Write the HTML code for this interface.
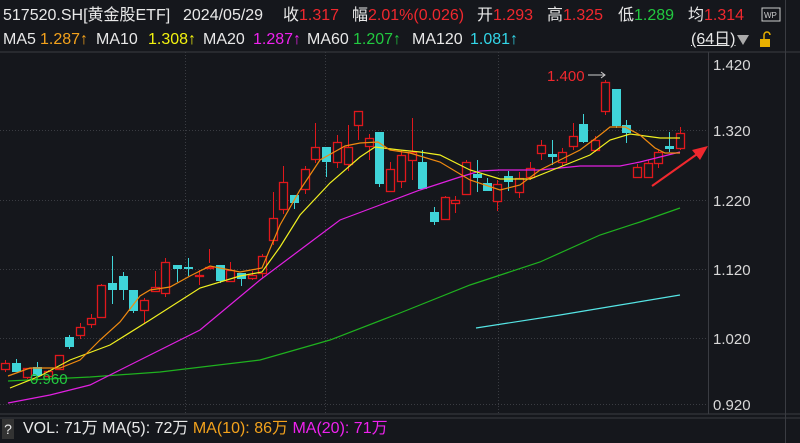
<!DOCTYPE html>
<html><head><meta charset="utf-8"><style>
body{margin:0;background:#15171c;width:800px;height:443px;overflow:hidden;font-family:"Liberation Sans","Noto Sans CJK SC",sans-serif;}
.t{position:absolute;white-space:nowrap;font-size:16px;line-height:20px;height:20px;color:#e8e8e8;}
.r{color:#f0282e}.g{color:#22c940}.o{color:#f3a21c}.y{color:#f2f20f}.m{color:#ee22ee}.c{color:#33d6e8}
</style></head><body>
<div class="t" style="left:3px;top:6px">517520.SH[黄金股ETF]</div>
<div class="t" style="left:183px;top:6px">2024/05/29</div>
<div class="t" style="left:283px;top:6px">收<span class="r">1.317</span></div>
<div class="t" style="left:352px;top:6px">幅<span class="r">2.01%(0.026)</span></div>
<div class="t" style="left:477px;top:6px">开<span class="r">1.293</span></div>
<div class="t" style="left:547px;top:6px">高<span class="r">1.325</span></div>
<div class="t" style="left:618px;top:6px">低<span class="g">1.289</span></div>
<div class="t" style="left:688px;top:6px">均<span class="r">1.314</span></div>
<div class="t" style="left:3px;top:30px">MA5</div><div class="t o" style="left:40px;top:30px">1.287↑</div>
<div class="t" style="left:96px;top:30px">MA10</div><div class="t y" style="left:148px;top:30px">1.308↑</div>
<div class="t" style="left:203px;top:30px">MA20</div><div class="t m" style="left:253px;top:30px">1.287↑</div>
<div class="t" style="left:307px;top:30px">MA60</div><div class="t g" style="left:353px;top:30px">1.207↑</div>
<div class="t" style="left:412px;top:30px">MA120</div><div class="t c" style="left:470px;top:30px">1.081↑</div>
<div class="t" style="left:691px;top:30px;text-decoration:underline">(64日)</div>
<div class="t" style="left:23px;top:419px">VOL: 71万 MA(5): 72万 <span class="o">MA(10): 86万</span> <span class="m">MA(20): 71万</span></div>
<div class="t" style="left:2px;top:419px;background:#333;width:12px;text-align:center;font-size:14px">?</div>
<svg width="800" height="443" style="position:absolute;left:0;top:0" id="s">
<line x1="0" y1="52" x2="800" y2="52" stroke="#3a3c42"/>
<line x1="0" y1="414" x2="800" y2="414" stroke="#3a3c42"/>
<line x1="0" y1="418" x2="800" y2="418" stroke="#3a3c42"/>
<line x1="708.5" y1="52" x2="708.5" y2="414" stroke="#3a3c42"/>
<line x1="785.5" y1="0" x2="785.5" y2="443" stroke="#3a3c42"/>
<g stroke="#3a3c42" stroke-dasharray="1,2">
<line x1="0" y1="130.5" x2="708" y2="130.5"/><line x1="0" y1="200.5" x2="708" y2="200.5"/><line x1="0" y1="269.5" x2="708" y2="269.5"/><line x1="0" y1="338.5" x2="708" y2="338.5"/><line x1="0" y1="404.5" x2="708" y2="404.5"/>
<line x1="185.5" y1="52" x2="185.5" y2="414"/><line x1="325.5" y1="52" x2="325.5" y2="414"/><line x1="498.5" y1="52" x2="498.5" y2="414"/>
</g>
<g font-size="15" fill="#d8d8d8" font-family="Liberation Sans">
<text x="713" y="70">1.420</text><text x="713" y="136">1.320</text><text x="713" y="206">1.220</text><text x="713" y="275">1.120</text><text x="713" y="344">1.020</text><text x="713" y="410">0.920</text>
</g>
<rect x="762" y="8" width="18" height="13" fill="none" stroke="#ccc"/><text x="764" y="18" font-size="8" fill="#ccc" font-family="Liberation Sans">WP</text>
<path d="M737 35 L749 35 L743 45Z" fill="#aaa"/>
<rect x="760" y="39" width="10" height="8" fill="#e8b000"/><path d="M764 39 v-4 a3 3 0 0 1 6 0" fill="none" stroke="#e8b000" stroke-width="1.5"/>
<g id="c"></g>
<g fill="none" stroke-width="1.2">
<polyline stroke="#1fb21f" points="8,381 90,377 160,372 260,360 330,340 400,313 470,285 540,262 600,235 640,222 680,208"/>
<polyline stroke="#55e5e5" points="476,328 560,315 620,305 680,295"/>
<polyline stroke="#e020e0" points="8,403 50,395 90,385 150,355 200,330 260,280 300,250 340,220 380,205 420,190 460,177 480,171 500,170 540,170 580,166 620,166 640,162 680,152"/>
<polyline stroke="#f0f020" points="10,388 40,376 70,360 110,345 150,320 200,288 240,276 262,272 280,247 300,215 330,183 360,157 375,147 400,150 420,152 440,155 470,170 500,179 530,179 560,167 590,155 610,140 630,134 660,138 680,138"/>
<polyline stroke="#f08a10" points="8,376 30,368 60,368 80,360 100,340 120,322 140,296 150,290 170,287 190,276 210,266 240,272 262,268 280,225 300,190 320,160 345,146 360,143 378,142 390,150 410,153 440,162 470,180 500,190 520,185 540,170 560,160 580,150 600,135 610,127 625,127 640,135 655,148 665,153 680,153"/>
</g>
<text x="547" y="81" font-size="15" fill="#f0282e" font-family="Liberation Sans">1.400</text>
<path d="M588 75 H605 M601 72 L605 75 L601 78" stroke="#ccc" fill="none"/>
<text x="30" y="384" font-size="15" fill="#22c940" font-family="Liberation Sans">0.960</text>
<path d="M652 186 L700 152" stroke="#f0282e" stroke-width="2"/><path d="M708 146 L692 150 L700 160Z" fill="#f0282e"/>
</svg>
<script>
var d=[[5,363,369,360,372,1],[16,363,372,359,372,0],[27,368,377,368,379,1],[37,367,376,362,376,0],[48,371,376,370,378,1],[59,355,369,355,369,1],[69,337,347,335,349,0],[80,327,335,323,339,1],[91,318,324,314,328,1],[101,285,317,284,317,1],[112,283,290,256,304,0],[123,276,290,272,300,0],[133,290,311,290,313,0],[144,300,310,298,324,1],[155,287,291,271,291,1],[165,262,293,258,297,1],[177,265,269,265,282,0],[188,267,269,258,276,0],[199,275,276,270,285,1],[209,267,268,249,263,1],[220,265,281,265,283,0],[230,270,281,262,281,1],[241,273,279,273,286,0],[252,275,278,271,280,1],[262,256,273,254,278,1],[273,218,240,192,245,1],[283,182,209,166,214,1],[294,195,203,195,209,0],[305,169,189,166,194,1],[315,147,159,123,163,1],[326,147,162,147,177,0],[337,142,162,135,168,1],[348,147,164,125,171,1],[358,111,125,111,140,1],[369,138,146,134,160,1],[379,132,184,132,187,0],[390,169,191,162,191,1],[401,155,181,150,188,1],[412,152,160,118,180,1],[422,162,189,150,189,0],[434,212,222,207,225,0],[445,197,219,196,219,1],[455,200,203,196,213,1],[466,162,194,160,194,1],[477,174,178,160,192,0],[487,183,191,178,191,0],[497,184,201,180,211,1],[508,176,182,171,191,0],[519,178,192,172,198,1],[530,168,177,162,180,1],[541,145,153,140,160,1],[552,154,157,140,165,0],[562,152,162,148,166,1],[573,136,146,123,150,1],[583,124,142,114,143,0],[595,140,150,136,152,1],[605,82,111,80,115,1],[616,89,126,89,128,0],[626,125,133,120,143,0],[637,167,177,164,177,1],[648,163,177,160,177,1],[658,152,163,150,168,1],[669,146,149,132,152,0],[680,133,148,127,150,1]];
var h='';d.forEach(function(a){var x=a[0],col=a[5]?'#e0181c':'#3fd4d8',hh=Math.max(a[2]-a[1],1);
h+='<line x1="'+(x+.5)+'" y1="'+a[3]+'" x2="'+(x+.5)+'" y2="'+a[4]+'" stroke="'+col+'"/>';
if(a[5])h+='<rect x="'+(x-3.5)+'" y="'+(a[1]+.5)+'" width="8" height="'+hh+'" fill="#15171c" stroke="'+col+'" stroke-width="1.3"/>';
else h+='<rect x="'+(x-4)+'" y="'+a[1]+'" width="9" height="'+hh+'" fill="'+col+'"/>';});
document.getElementById('c').innerHTML=h;
</script>
</body></html>
